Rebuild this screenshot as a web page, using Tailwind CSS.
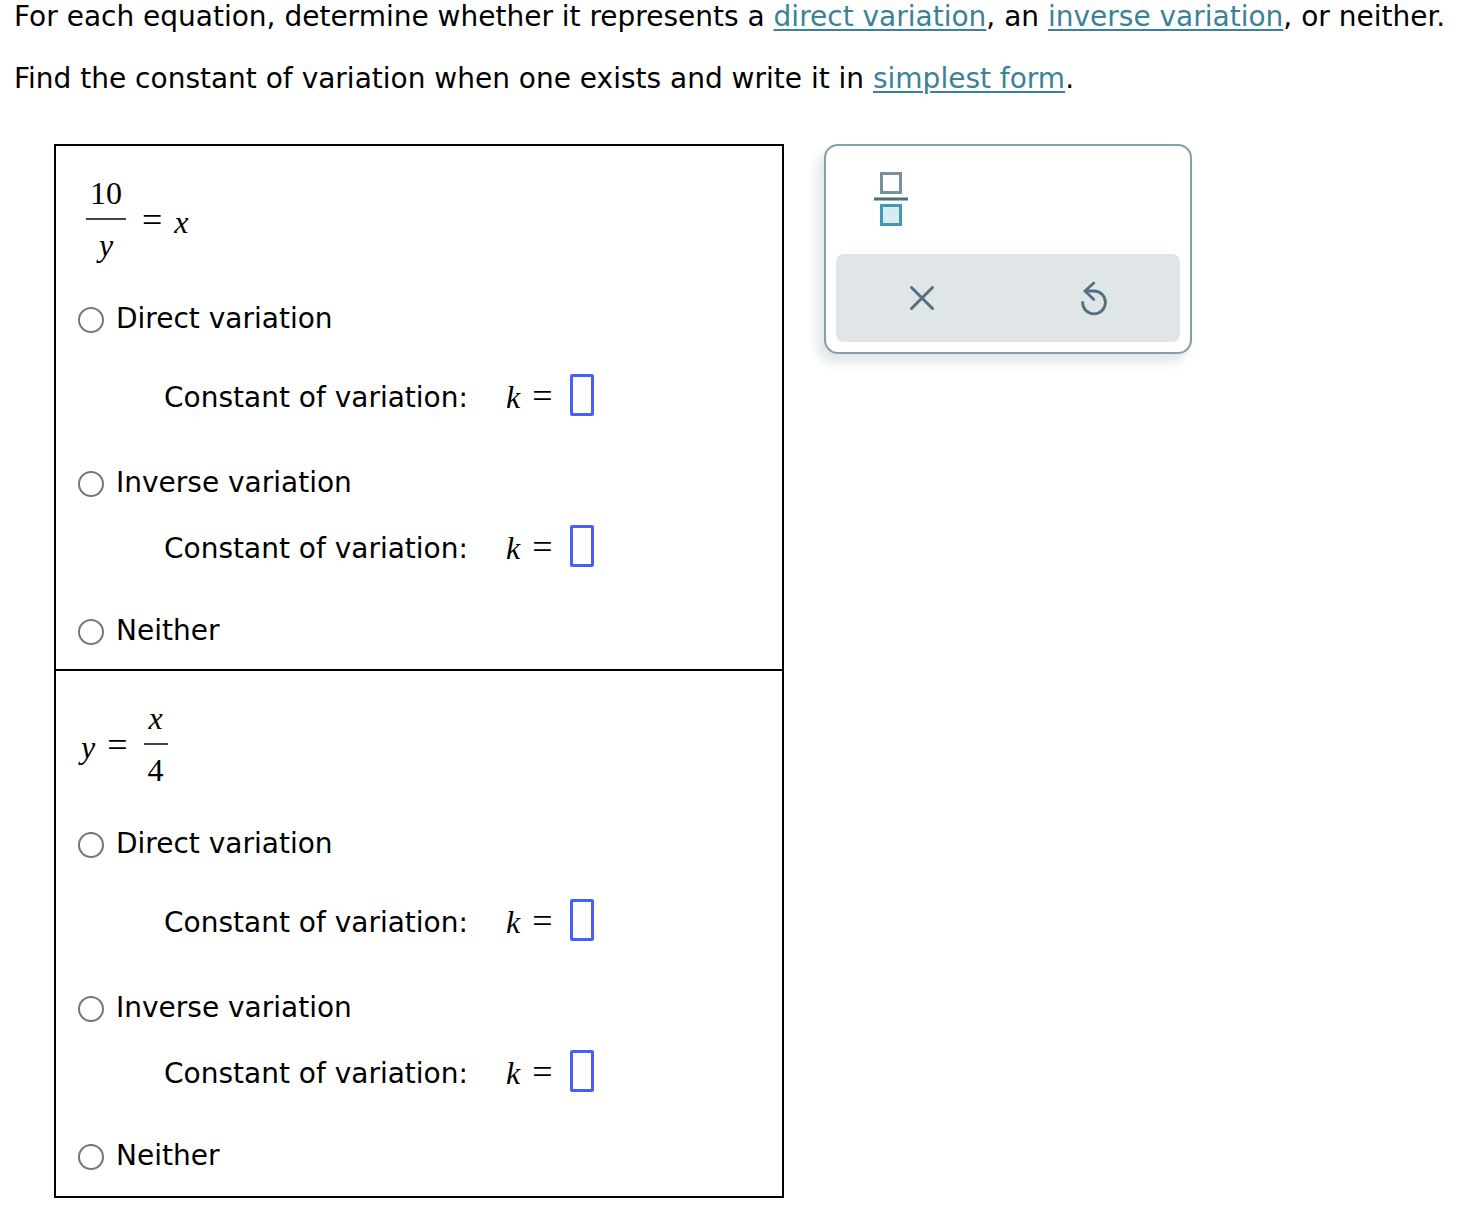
<!DOCTYPE html>
<html lang="en">

<head>
    <meta charset="UTF-8">
    <meta name="viewport" content="width=device-width, initial-scale=1.0">
    <title>Direct and inverse variation</title>
    <!-- Tailwind CSS CDN -->
    <script src="https://cdn.jsdelivr.net/npm/@tailwindcss/browser@4"></script>
</head>

<body class="bg-white text-black font-['DejaVu_Sans',sans-serif] text-[28px] leading-8">

    <!-- Instructions -->
    <div class="pt-px pl-[14px] space-y-[30px]">
        <p>For each equation, determine whether it represents a <a href="#direct" class="text-[#3a8298] underline decoration-2 underline-offset-3">direct variation</a>, an <a href="#inverse" class="text-[#3a8298] underline decoration-2 underline-offset-3">inverse variation</a>, or neither.</p>
        <p>Find the constant of variation when one exists and write it in <a href="#simplest" class="text-[#3a8298] underline decoration-2 underline-offset-3">simplest form</a>.</p>
    </div>

    <main class="flex items-start gap-10 mt-[49px] pl-[54px] pb-3">

        <form class="w-[730px] border-2 border-black divide-y-2 divide-black">

            <!-- Equation 1 -->
            <fieldset class="px-[22px] pt-[29px] pb-[22px]" aria-label="10 over y equals x">
                <div class="flex items-center pl-2 font-['Liberation_Serif',serif] text-[32px] leading-9">
                    <div class="flex flex-col gap-[7px] text-center">
                        <span class="px-1">10</span>
                        <span class="h-[2px] bg-[#444444]"></span>
                        <span class="px-1 italic">y</span>
                    </div>
                    <span class="ml-4 pt-[2px] text-[36px] leading-9">=</span>
                    <span class="ml-3 pt-[6px] italic">x</span>
                </div>

                <label class="flex items-start gap-3 mt-10">
                    <input type="radio" name="eq1" value="direct" class="appearance-none size-[26px] mt-1 rounded-full border-2 border-[#767676] checked:bg-[#767676]">
                    <span>Direct variation</span>
                </label>
                <div class="flex items-center mt-[39px] pl-[86px]">
                    <label for="eq1-direct-k" class="flex items-center">
                        <span class="pt-[5px]">Constant of variation:</span>
                        <span class="ml-[38px] pt-1 font-['Liberation_Serif',serif] text-[32px] leading-9 italic">k</span>
                        <span class="ml-3 pt-[2px] font-['Liberation_Serif',serif] text-[36px] leading-9">=</span>
                    </label>
                    <input type="text" id="eq1-direct-k" class="ml-[18px] w-6 h-[42px] rounded-xs border-3 border-[#4660f5]">
                </div>

                <label class="flex items-start gap-3 mt-[51px]">
                    <input type="radio" name="eq1" value="inverse" class="appearance-none size-[26px] mt-1 rounded-full border-2 border-[#767676] checked:bg-[#767676]">
                    <span>Inverse variation</span>
                </label>
                <div class="flex items-center mt-[26px] pl-[86px]">
                    <label for="eq1-inverse-k" class="flex items-center">
                        <span class="pt-[5px]">Constant of variation:</span>
                        <span class="ml-[38px] pt-1 font-['Liberation_Serif',serif] text-[32px] leading-9 italic">k</span>
                        <span class="ml-3 pt-[2px] font-['Liberation_Serif',serif] text-[36px] leading-9">=</span>
                    </label>
                    <input type="text" id="eq1-inverse-k" class="ml-[18px] w-6 h-[42px] rounded-xs border-3 border-[#4660f5]">
                </div>

                <label class="flex items-start gap-3 mt-12">
                    <input type="radio" name="eq1" value="neither" class="appearance-none size-[26px] mt-1 rounded-full border-2 border-[#767676] checked:bg-[#767676]">
                    <span>Neither</span>
                </label>
            </fieldset>

            <!-- Equation 2 -->
            <fieldset class="px-[22px] pt-[29px] pb-6" aria-label="y equals x over 4">
                <div class="flex items-center pl-[3px] font-['Liberation_Serif',serif] text-[32px] leading-9">
                    <span class="pt-[6px] italic">y</span>
                    <span class="ml-3 pt-[2px] text-[36px] leading-9">=</span>
                    <div class="ml-4 flex flex-col gap-[7px] text-center">
                        <span class="px-1 italic">x</span>
                        <span class="h-[2px] bg-[#444444]"></span>
                        <span class="px-1">4</span>
                    </div>
                </div>

                <label class="flex items-start gap-3 mt-10">
                    <input type="radio" name="eq2" value="direct" class="appearance-none size-[26px] mt-1 rounded-full border-2 border-[#767676] checked:bg-[#767676]">
                    <span>Direct variation</span>
                </label>
                <div class="flex items-center mt-[39px] pl-[86px]">
                    <label for="eq2-direct-k" class="flex items-center">
                        <span class="pt-[5px]">Constant of variation:</span>
                        <span class="ml-[38px] pt-1 font-['Liberation_Serif',serif] text-[32px] leading-9 italic">k</span>
                        <span class="ml-3 pt-[2px] font-['Liberation_Serif',serif] text-[36px] leading-9">=</span>
                    </label>
                    <input type="text" id="eq2-direct-k" class="ml-[18px] w-6 h-[42px] rounded-xs border-3 border-[#4660f5]">
                </div>

                <label class="flex items-start gap-3 mt-[51px]">
                    <input type="radio" name="eq2" value="inverse" class="appearance-none size-[26px] mt-1 rounded-full border-2 border-[#767676] checked:bg-[#767676]">
                    <span>Inverse variation</span>
                </label>
                <div class="flex items-center mt-[26px] pl-[86px]">
                    <label for="eq2-inverse-k" class="flex items-center">
                        <span class="pt-[5px]">Constant of variation:</span>
                        <span class="ml-[38px] pt-1 font-['Liberation_Serif',serif] text-[32px] leading-9 italic">k</span>
                        <span class="ml-3 pt-[2px] font-['Liberation_Serif',serif] text-[36px] leading-9">=</span>
                    </label>
                    <input type="text" id="eq2-inverse-k" class="ml-[18px] w-6 h-[42px] rounded-xs border-3 border-[#4660f5]">
                </div>

                <label class="flex items-start gap-3 mt-12">
                    <input type="radio" name="eq2" value="neither" class="appearance-none size-[26px] mt-1 rounded-full border-2 border-[#767676] checked:bg-[#767676]">
                    <span>Neither</span>
                </label>
            </fieldset>
        </form>

        <!-- Math palette -->
        <div class="w-[368px] p-[10px] border-2 border-[#879fa8] rounded-[14px] bg-white shadow-[-6px_8px_12px_#dfe5e7]">
            <button type="button" aria-label="Fraction" class="block ml-9 mt-4 mb-7">
                <svg class="block" width="38" height="54" viewBox="0 0 38 54" fill="none">
                    <rect x="9.5" y="1.5" width="19" height="19" stroke="#78909c" stroke-width="3" />
                    <path d="M2 27H36" stroke="#9fb1ba" stroke-width="4" />
                    <path d="M2 27H36" stroke="#4c6f7f" stroke-width="2" />
                    <rect x="9.5" y="33.5" width="19" height="19" fill="#d5edf2" stroke="#4299b3" stroke-width="3" />
                </svg>
            </button>
            <div class="grid grid-cols-2 h-[88px] rounded-lg bg-[#e0e5e7]">
                <button type="button" aria-label="Clear" class="flex items-center justify-center">
                    <svg width="36" height="36" viewBox="0 0 36 36" fill="none" stroke="#4f7180" stroke-width="3" stroke-linecap="round">
                        <path d="M7.5 7.5L28.5 28.5M28.5 7.5L7.5 28.5" />
                    </svg>
                </button>
                <button type="button" aria-label="Undo" class="flex items-center justify-center">
                    <svg width="36" height="36" viewBox="0 0 36 36" fill="none" stroke="#4f7180" stroke-width="2.8" stroke-linecap="round" stroke-linejoin="round">
                        <path d="M17.8 3L9 11L17.8 19.5" />
                        <path d="M9 11H18A11.4 11.4 0 1 1 6.6 22.4" />
                    </svg>
                </button>
            </div>
        </div>
    </main>

</body>

</html>
